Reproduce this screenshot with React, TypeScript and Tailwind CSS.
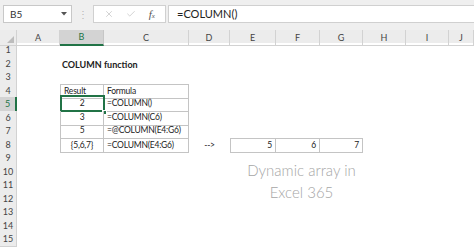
import { X, Check } from "lucide-react";

const cols = ["A", "B", "C", "D", "E", "F", "G", "H", "I", "J"];
const gridCols = "grid grid-cols-[17px_43px_44px_85px_41px_46px_44px_43px_43px_43px_1fr]";
const cellFont = "font-['Lato',sans-serif] text-[8.5px] tracking-[-0.2px] text-[#222]";
const tb = "border-[#c4c4c4]";

function Toolbar() {
  return (
    <div className="h-[30px] bg-[#efefef] flex items-start pt-[5px] pl-[3px] pr-0">
      <div className="w-[69px] h-[18px] bg-white border border-[#c8c8c8] flex items-center justify-between pl-[6px] pr-[4px]">
        <span className="font-['Lato',sans-serif] text-[10px] text-[#333]">B5</span>
        <svg width="6" height="4" viewBox="0 0 6 4">
          <polygon points="0,0 6,0 3,3.5" fill="#555" />
        </svg>
      </div>
      <div className="w-[21px] h-[18px] flex items-center justify-center text-[#b5b5b5] text-[10px] leading-none">
        ⋮
      </div>
      <div className="w-[73px] h-[18px] bg-white border border-[#d0d0d0] flex items-center justify-around px-[4px]">
        <X size={10} strokeWidth={1.5} color="#b8b8b8" />
        <Check size={10} strokeWidth={1.5} color="#b8b8b8" />
        <span className="font-['Liberation_Serif',serif] italic text-[11px] text-[#555] leading-none">
          f<span className="text-[7px]">x</span>
        </span>
      </div>
      <div className="flex-1 ml-[2px] h-[18px] bg-white border border-[#d0d0d0] border-r-0 flex items-center pl-[8px]">
        <span className="font-['Lato',sans-serif] text-[11px] text-[#222]">=COLUMN()</span>
      </div>
    </div>
  );
}

function HeaderRow() {
  return (
    <div className={`${gridCols} h-[13px] bg-[#ececec]`}>
      <div className="border-r border-b border-[#d2d2d2] relative">
        <svg className="absolute right-[2px] bottom-[2px]" width="7" height="7" viewBox="0 0 7 7">
          <polygon points="7,0 7,7 0,7" fill="#bdbdbd" />
        </svg>
      </div>
      {cols.map((c) =>
        c === "B" ? (
          <div
            key={c}
            className="bg-[#d3d3d3] border-r border-b-2 border-r-[#c6c6c6] border-b-[#217346] flex items-center justify-center font-['Lato',sans-serif] text-[9px] text-[#217346]"
          >
            {c}
          </div>
        ) : (
          <div
            key={c}
            className="border-r border-b border-[#d2d2d2] flex items-center justify-center font-['Lato',sans-serif] text-[9px] text-[#444]"
          >
            {c}
          </div>
        )
      )}
    </div>
  );
}

function Cell({ children, className = "" }: { children?: React.ReactNode; className?: string }) {
  return <div className={`flex items-center whitespace-nowrap ${cellFont} ${className}`}>{children}</div>;
}

function rowCells(r: number) {
  const empty = (k: string) => <Cell key={k} />;
  if (r === 2) {
    return [
      empty("a"),
      <Cell key="b" className="pl-[2px] font-bold text-[9px] tracking-normal overflow-visible">
        COLUMN function
      </Cell>,
      ...["c", "d", "e", "f", "g", "h", "i", "j"].map(empty),
    ];
  }
  if (r === 4) {
    return [
      empty("a"),
      <Cell key="b" className={`pl-[3px] border ${tb}`}>Result</Cell>,
      <Cell key="c" className={`pl-[3px] border-t border-r border-b ${tb}`}>Formula</Cell>,
      ...["d", "e", "f", "g", "h", "i", "j"].map(empty),
    ];
  }
  const table: Record<number, [string, string]> = {
    5: ["2", "=COLUMN()"],
    6: ["3", "=COLUMN(C6)"],
    7: ["5", "=@COLUMN(E4:G6)"],
    8: ["{5,6,7}", "=COLUMN(E4:G6)"],
  };
  if (table[r]) {
    const [v, f] = table[r];
    const cells = [
      empty("a"),
      <Cell key="b" className={`justify-center border-l border-r border-b ${tb} relative`}>
        {v}
        {r === 5 && (
          <>
            <div className="absolute left-[-1px] top-[-2px] right-[-2px] bottom-[-1px] border-2 border-[#217346]" />
            <div className="absolute right-[-4px] bottom-[-4px] w-[5px] h-[5px] bg-[#217346] border border-white" />
          </>
        )}
      </Cell>,
      <Cell key="c" className={`pl-[3px] border-r border-b ${tb}`}>{f}</Cell>,
    ];
    if (r === 8) {
      cells.push(
        <Cell key="d" className="justify-center">
          {"-->"}
        </Cell>,
        <Cell key="e" className={`justify-end pr-[3px] border ${tb}`}>5</Cell>,
        <Cell key="f" className={`justify-end pr-[3px] border-t border-r border-b ${tb}`}>6</Cell>,
        <Cell key="g" className={`justify-end pr-[3px] border-t border-r border-b ${tb}`}>7</Cell>,
        ...["h", "i", "j"].map(empty)
      );
    } else {
      cells.push(...["d", "e", "f", "g", "h", "i", "j"].map(empty));
    }
    return cells;
  }
  if (r === 10) {
    return [
      ...["a", "b", "c", "d"].map(empty),
      <div key="note" className="col-span-3 relative">
        <div className="absolute left-[10px] right-0 top-[-6px] text-center font-['Lato',sans-serif] font-light text-[15px] leading-[22px] text-[#a6a6a6] whitespace-nowrap">
          <div>Dynamic array in</div>
          <div>Excel 365</div>
        </div>
      </div>,
      ...["h", "i", "j"].map(empty),
    ];
  }
  return cols.map((c) => empty(c));
}

export default function App() {
  const rows = Array.from({ length: 15 }, (_, i) => i + 1);
  return (
    <div className="w-[474px] h-[248px] overflow-hidden bg-white">
      <Toolbar />
      <HeaderRow />
      {rows.map((r) => (
        <div key={r} className={`${gridCols} ${r % 2 === 1 ? "h-[14px]" : "h-[13px]"}`}>
          {r === 5 ? (
            <div className="bg-[#d3d3d3] border-b border-r-2 border-b-[#c6c6c6] border-r-[#217346] flex items-center justify-center font-['Lato',sans-serif] text-[9px] text-[#217346]">
              {r}
            </div>
          ) : (
            <div className="bg-[#ececec] border-r border-b border-[#d2d2d2] flex items-center justify-center font-['Lato',sans-serif] text-[9px] text-[#444]">
              {r}
            </div>
          )}
          {rowCells(r)}
        </div>
      ))}
    </div>
  );
}
